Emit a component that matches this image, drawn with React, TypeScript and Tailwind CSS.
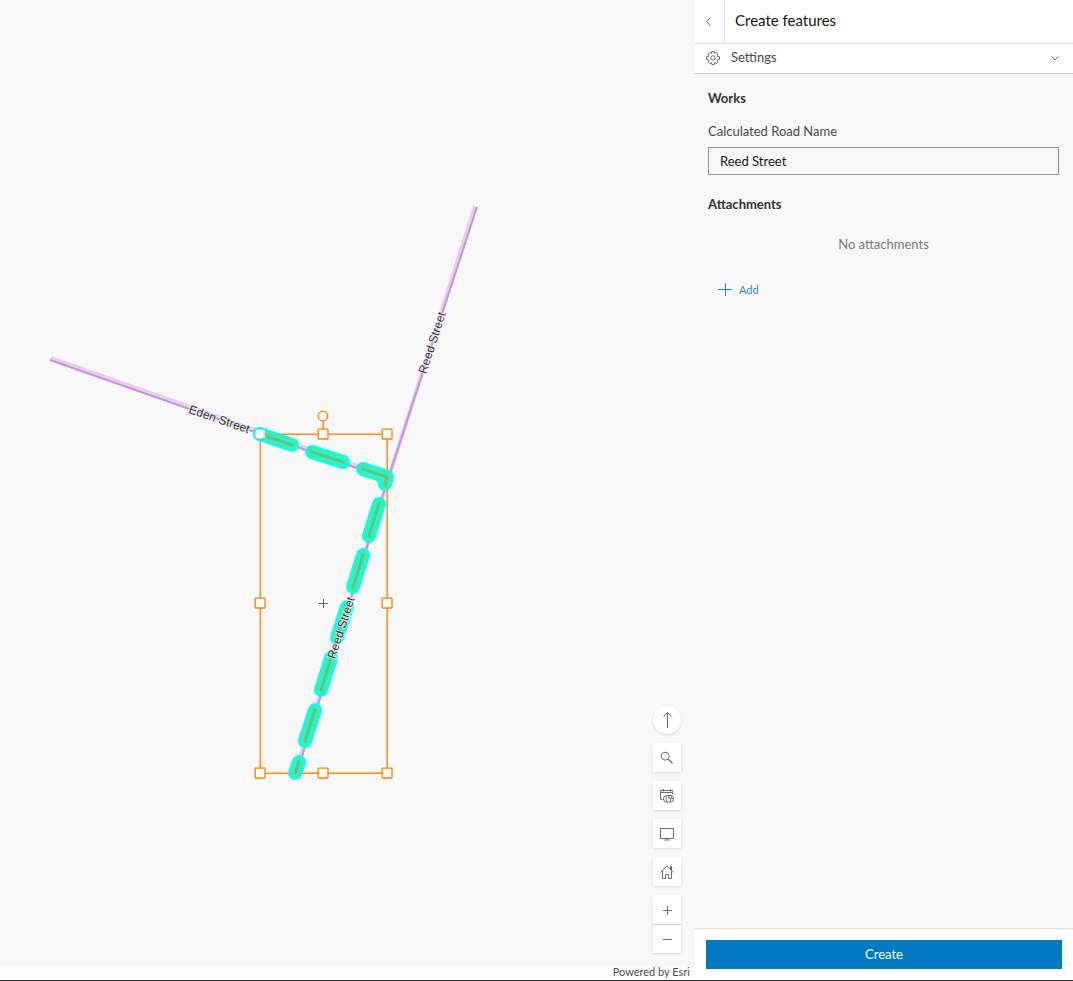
import type { ReactNode } from "react";

// segments of the sketched line, in map coordinates
const DASHES = [
  "M260 434L292 445",
  "M312 452L343 462",
  "M363 469L387 477L385 484",
  "M379 504L369 536",
  "M363 555L353 587",
  "M347 607L337 638",
  "M331 658L321 690",
  "M315 710L305 741",
  "M299 762L295 773",
];

const HANDLES = [
  [323, 434],
  [387, 434],
  [260, 603],
  [387, 603],
  [260, 773],
  [323, 773],
  [387, 773],
];

const LABELS = [
  { text: "Eden Street", x: 218, y: 423, angle: 19 },
  { text: "Reed Street", x: 436, y: 344, angle: -72 },
  { text: "Reed Street", x: 345, y: 629, angle: -72 },
];

type MapButtonProps = {
  label: string;
  className?: string;
  children: ReactNode;
};

function MapButton({ label, className = "h-[29px] shadow", children }: MapButtonProps) {
  return (
    <button
      type="button"
      aria-label={label}
      className={`flex w-full items-center justify-center bg-white text-[#6e6e6e] hover:bg-zinc-50 ${className}`}
    >
      <svg width="16" height="16" viewBox="0 0 16 16" fill="none" stroke="currentColor">
        {children}
      </svg>
    </button>
  );
}

function MapCanvas() {
  return (
    <svg
      className="absolute inset-0 h-full w-full"
      fill="none"
      role="img"
      aria-label="Map of Eden Street and Reed Street"
    >
      <g stroke="#e5cff0" strokeWidth="4">
        <path d="M51 358L388 477" />
        <path d="M475 206L294 776" />
      </g>
      <g stroke="#c893dc" strokeWidth="2">
        <path d="M50 360L388 479" />
        <path d="M477 207L388 479L296 776" />
      </g>

      <path d="M260.3 434.2H387.2V773.2H260.3Z" stroke="#ff8c1a" strokeWidth="1.5" />
      <path d="M323.2 434V421" stroke="#ff8c1a" strokeWidth="1.5" />

      <g strokeLinejoin="round">
        {DASHES.map((d) => (
          <g key={d}>
            <path d={d} stroke="#00ffff" strokeWidth="14" strokeLinecap="round" />
            <path d={d} stroke="#45eba8" strokeWidth="10" strokeLinecap="round" />
            <path d={d} stroke="#3fd09d" strokeWidth="3" strokeLinecap="square" />
          </g>
        ))}
      </g>
      <path d="M387.2 470V490M290 773.2H300" stroke="#ff8c1a" strokeOpacity="0.5" />

      <circle cx="260" cy="434" r="6" fill="#fff" stroke="#00ffff" strokeWidth="2" />
      <path d="M256 434V430H265V438H256Z" fill="#fff" />
      <path d="M264 430V439H257M265 434.5H274" stroke="#ff8c1a" strokeOpacity="0.7" />

      <circle cx="323" cy="416" r="4.8" fill="#fff" stroke="#ff8000" strokeWidth="1.3" />
      {HANDLES.map(([x, y]) => (
        <rect
          key={`${x}-${y}`}
          x={x - 4.8}
          y={y - 4.8}
          width="9.8"
          height="9.8"
          rx="0.5"
          fill="#fff"
          stroke="#ff8000"
          strokeWidth="1.3"
        />
      ))}
      <path d="M318.5 603.5H328M323.5 599V608" stroke="#666" />

      {LABELS.map(({ text, x, y, angle }) => (
        <text
          key={`${x}-${y}`}
          x={x}
          y={y}
          transform={`rotate(${angle} ${x} ${y})`}
          textAnchor="middle"
          fill="#343434"
          stroke="#f8f8f8"
          strokeOpacity="0.7"
          strokeWidth="2"
          paintOrder="stroke"
          className="font-['Liberation_Sans',sans-serif] text-[12px]"
        >
          {text}
        </text>
      ))}
    </svg>
  );
}

function MapView() {
  return (
    <main className="relative flex min-w-0 flex-1 flex-col justify-end bg-[#f8f8f8]">
      <MapCanvas />
      <div className="relative mr-3.5 mb-[13px] flex w-7 flex-col gap-[9px] self-end">
        <MapButton label="Reset orientation" className="h-7 rounded-full shadow">
          <path d="M8.5 0.5V16M4.5 4.5L8.5 0.5L12.5 4.5" />
        </MapButton>
        <MapButton label="Search">
          <circle cx="6.2" cy="6.2" r="4" />
          <path d="M9.2 9.2L13.5 13.5" strokeWidth="1.4" />
        </MapButton>
        <MapButton label="Basemaps">
          <path d="M3.5 11.5H1.5V2.5H13.5V6M1.5 4.5H13.5M4.5 1V3.5M11.5 1V3.5" />
          <rect x="4.5" y="7.5" width="10" height="6.5" rx="3" />
          <path d="M6.5 8L8 9.5L7 11L8 13.5M10 8L9.5 10L11.5 10.5V13.5M12.5 8.5V10.5H14" />
        </MapButton>
        <MapButton label="Full view">
          <path d="M1.5 2.5H14.5V12.5H1.5ZM8 12.5V14M5.5 14H10.5" />
        </MapButton>
        <MapButton label="Home">
          <path d="M1.5 8.5L8 1.8L14.5 8.5M3.5 7V14.5H6.5V10.5H9.5V14.5H12.5V7M11.5 5V2.5H12.5V6" />
        </MapButton>
        <div className="divide-y divide-[#d0d0d0] shadow">
          <MapButton label="Zoom in" className="h-[30px]">
            <path d="M4 8.5H13M8.5 4V13" />
          </MapButton>
          <MapButton label="Zoom out" className="h-7">
            <path d="M4 8.5H13" />
          </MapButton>
        </div>
      </div>
      <div className="relative bg-[#fdfdfd] pr-[5px] pb-0.5 text-right text-[11px] leading-3 text-[#4c4c4c]">
        Powered by{" "}
        <a href="#esri" className="hover:underline">
          Esri
        </a>
      </div>
    </main>
  );
}

function EditorPanel() {
  return (
    <aside className="flex w-[378px] shrink-0 flex-col bg-[#f8f8f8] text-[13px] text-[#323232]">
      <header className="flex h-11 items-stretch border-b border-[#dfdfdf] bg-white">
        <button
          type="button"
          aria-label="Back"
          className="flex w-[30px] items-center justify-center border-r border-[#dfdfdf] pr-0.5 text-[#6a6a6a]"
        >
          <svg width="16" height="16" viewBox="0 0 16 16" fill="none" stroke="currentColor">
            <path d="M9.5 3.5L5.5 7.5L9.5 11.5" />
          </svg>
        </button>
        <h1 className="px-2.5 text-[15px] leading-10 text-[#151515]">Create features</h1>
      </header>

      <button
        type="button"
        className="flex h-[30px] items-center border-b border-[#cacaca] bg-white px-2.5 pb-px text-left text-[#4a4a4a]"
      >
        <svg width="16" height="16" viewBox="0 0 16 16" fill="none" stroke="#6a6a6a">
          <path d="M6.8 1.5H9.2L9.6 3.4L11.2 2.4L13 4.2L12 6L14.5 6.8V9.2L12.3 10L13 11.8L11.2 13.6L9.6 12.6L9.2 14.5H6.8L6.4 12.6L4.8 13.6L3 11.8L4 10L1.5 9.2V6.8L4 6L3 4.2L4.8 2.4L6.4 3.4Z" />
          <circle cx="8" cy="8" r="2.2" />
        </svg>
        <span className="ml-2.5 flex-1">Settings</span>
        <svg width="16" height="16" viewBox="0 0 16 16" fill="none" stroke="#6a6a6a">
          <path d="M4.5 6.5L8 10L11.5 6.5" />
        </svg>
      </button>

      <form className="flex-1 pt-3.5 pr-3.5 pl-[13px] leading-5">
        <h2 className="font-bold">Works</h2>
        <label htmlFor="road-name" className="mt-[13px] block text-[#4a4a4a]">
          Calculated Road Name
        </label>
        <input
          id="road-name"
          type="text"
          defaultValue="Reed Street"
          className="mt-1.5 block h-7 w-full border border-[#949494] bg-[#f8f8f8] px-[11px] text-[#151515]"
        />
        <h2 className="mt-[19px] font-bold">Attachments</h2>
        <p className="mt-5 text-center text-[#7a7a7a]">No attachments</p>
        <button
          type="button"
          className="mt-[26px] ml-[9px] flex h-5 items-center text-[11px] text-[#2f8fc9]"
        >
          <svg width="16" height="16" viewBox="0 0 16 16" fill="none" stroke="#1a86c7">
            <path d="M1 7.5H15M8.5 1V14" />
          </svg>
          <span className="ml-1.5">Add</span>
        </button>
      </form>

      <footer className="border-t border-[#dfdfdf] bg-white p-[11px]">
        <button
          type="button"
          className="block h-[29px] w-full bg-[#007ac2] text-white hover:bg-[#00619b]"
        >
          Create
        </button>
      </footer>
    </aside>
  );
}

export default function App() {
  return (
    <div className="flex min-h-screen border-b border-[#323232] font-['Lato',sans-serif]">
      <MapView />
      <EditorPanel />
    </div>
  );
}
